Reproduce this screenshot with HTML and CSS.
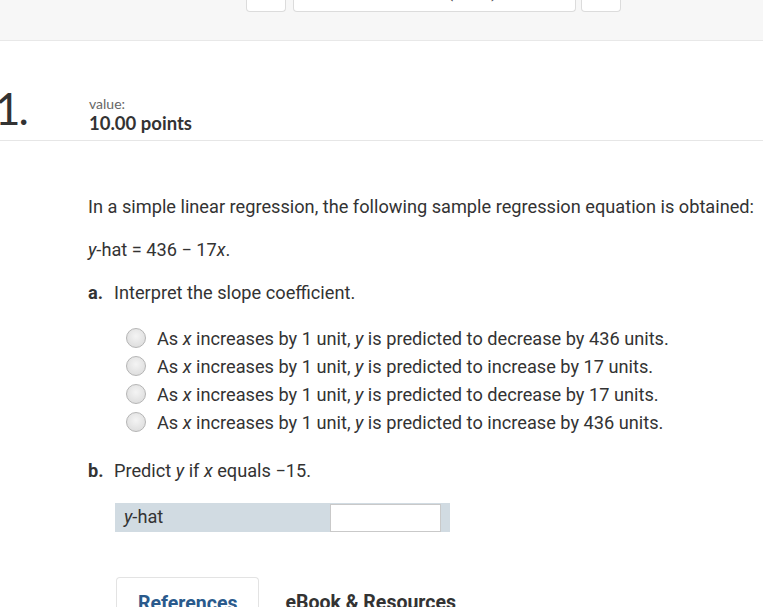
FILE: index.html
```html
<!DOCTYPE html>
<html>
<head>
<meta charset="utf-8">
<link rel="stylesheet" href="styles.css">
</head>
<body>
<header class="topbar">
  <nav class="navrow">
    <div class="navbtn small"></div>
    <div class="navbtn wide"><span class="navtext">Question 1 (1 of 1)</span></div>
    <div class="navbtn small"></div>
  </nav>
</header>
<section class="qhead">
  <div class="qnum">1.</div>
  <div class="qvalue">
    <div class="vlabel">value:</div>
    <div class="vpoints">10.00 points</div>
  </div>
</section>
<main class="qbody">
  <p class="stem">In a simple linear regression, the following sample regression equation is obtained:</p>
  <p class="eq"><i>y</i>-hat = 436 &minus; 17<i>x</i>.</p>
  <div class="part"><b class="plabel">a.</b><span>Interpret the slope coefficient.</span></div>
  <ul class="options">
    <li><span class="radio"></span><span>As <i>x</i> increases by 1 unit, <i>y</i> is predicted to decrease by 436 units.</span></li>
    <li><span class="radio"></span><span>As <i>x</i> increases by 1 unit, <i>y</i> is predicted to increase by 17 units.</span></li>
    <li><span class="radio"></span><span>As <i>x</i> increases by 1 unit, <i>y</i> is predicted to decrease by 17 units.</span></li>
    <li><span class="radio"></span><span>As <i>x</i> increases by 1 unit, <i>y</i> is predicted to increase by 436 units.</span></li>
  </ul>
  <div class="part partb"><b class="plabel">b.</b><span>Predict <i>y</i> if <i>x</i> equals &minus;15.</span></div>
  <div class="answer">
    <div class="alabel"><i>y</i>-hat</div>
    <div class="ainput"></div>
    <div class="aend"></div>
  </div>
  <div class="tabs">
    <div class="tab active">References</div>
    <div class="tab">eBook &amp; Resources</div>
  </div>
</main>
</body>
</html>
```
FILE: styles.css
```css
html, body {
  margin: 0;
  padding: 0;
  background: #fff;
  overflow: hidden;
}
body {
  font-family: Roboto, "Liberation Sans", sans-serif;
  color: #333;
  width: 763px;
  height: 607px;
}
.topbar {
  height: 40px;
  background: #f7f7f7;
  border-bottom: 1px solid #e8e8e8;
}
.navrow {
  display: flex;
  padding-left: 246px;
  height: 12px;
}
.navbtn {
  height: 11px;
  background: #fff;
  border: 1px solid #dcdcdc;
  border-top: none;
  border-radius: 0 0 4px 4px;
  overflow: hidden;
}
.navbtn.small { width: 38px; }
.navbtn.wide { width: 281px; margin: 0 5px 0 7px; }
.navtext {
  display: block;
  text-align: center;
  font-size: 15px;
  line-height: 15px;
  margin-top: -14px;
  color: #444;
}
.qhead {
  display: flex;
  height: 99px;
  border-bottom: 1px solid #e6e6e6;
}
.qnum {
  font-family: Lato, "Open Sans", sans-serif;
  font-weight: 400;
  font-size: 44px;
  line-height: 44px;
  letter-spacing: -2px;
  margin-top: 45px;
  margin-left: -5px;
  width: 94px;
  color: #333;
}
.qvalue {
  font-family: Lato, "Open Sans", sans-serif;
  margin-top: 55px;
}
.vlabel {
  font-size: 14px;
  line-height: 16px;
  color: #666;
}
.vpoints {
  font-size: 18.5px;
  line-height: 22px;
  font-weight: 700;
  color: #333;
}
.qbody {
  padding-left: 88px;
  font-size: 18.2px;
}
.stem {
  margin: 0;
  padding-top: 54px;
  line-height: 24px;
}
.eq {
  margin: 19px 0 0;
  line-height: 24px;
}
.part {
  display: flex;
  margin-top: 19px;
  line-height: 24px;
}
.plabel {
  width: 26px;
  font-weight: 700;
}
.options {
  list-style: none;
  margin: 19px 0 0;
  padding: 0 0 0 38px;
}
.options li {
  display: flex;
  align-items: center;
  height: 28px;
}
.radio {
  width: 18px;
  height: 18px;
  border-radius: 50%;
  border: 1px solid #b5b5b5;
  background: radial-gradient(circle at 50% 40%, #f4f4f4, #d8d8d8);
  margin-right: 11px;
  flex: none;
}
.partb { margin-top: 23px; }
.answer {
  display: flex;
  margin: 20px 0 0 27px;
  width: 335px;
  height: 29px;
  background: #d1dbe2;
}
.alabel {
  width: 206px;
  padding-left: 9px;
  line-height: 28px;
}
.ainput {
  width: 109px;
  height: 26px;
  margin-top: 1px;
  background: #fff;
  border: 1px solid #c9c9c9;
}
.aend { flex: 1; }
.tabs {
  display: flex;
  margin: 45px 0 0 28px;
}
.tab {
  font-size: 19.5px;
  font-weight: 700;
  padding: 14px 26px 0;
  height: 40px;
  color: #333;
}
.tab.active {
  color: #2a5a8c;
  border: 1px solid #e3e3e3;
  border-bottom: none;
  border-radius: 4px 4px 0 0;
  padding-left: 21px;
  padding-right: 21px;
}
```
